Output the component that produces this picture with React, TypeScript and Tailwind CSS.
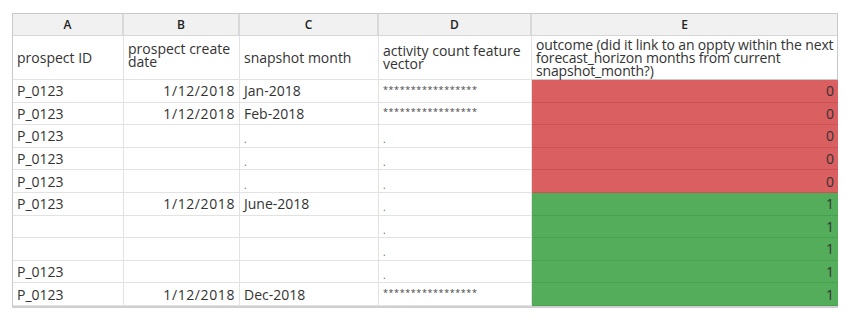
const cols = ['A', 'B', 'C', 'D', 'E'];

type Row = {
  id: string;
  date: string;
  month: string;
  vec: string;
  outcome: number;
};

const stars = '*****************';

const rows: Row[] = [
  { id: 'P_0123', date: '1/12/2018', month: 'Jan-2018', vec: stars, outcome: 0 },
  { id: 'P_0123', date: '1/12/2018', month: 'Feb-2018', vec: stars, outcome: 0 },
  { id: 'P_0123', date: '', month: '.', vec: '.', outcome: 0 },
  { id: 'P_0123', date: '', month: '.', vec: '.', outcome: 0 },
  { id: 'P_0123', date: '', month: '.', vec: '.', outcome: 0 },
  { id: 'P_0123', date: '1/12/2018', month: 'June-2018', vec: '.', outcome: 1 },
  { id: '', date: '', month: '', vec: '.', outcome: 1 },
  { id: '', date: '', month: '', vec: '.', outcome: 1 },
  { id: 'P_0123', date: '', month: '', vec: '.', outcome: 1 },
  { id: 'P_0123', date: '1/12/2018', month: 'Dec-2018', vec: stars, outcome: 1 },
];

const grid = 'grid grid-cols-[111px_116px_139px_153px_306px]';
const cell = 'border-r border-b border-[#e2e2e2] h-[22.6px] flex items-center overflow-hidden whitespace-nowrap';

export default function App() {
  return (
    <div className="w-[846px] h-[317px] bg-white pt-[13px] pl-[12px] font-['Open_Sans',sans-serif] text-[#333] text-[14px]">
      <div className="w-[826px] border-l border-t border-b-2 border-[#c9c9c9] border-b-[#cfcfcf]">
        {/* column letters */}
        <div className={grid + ' bg-[#f1f1f1] h-[22px]'}>
          {cols.map((c, i) => (
            <div
              key={c}
              className={
                'flex items-center justify-center text-[12px] font-semibold text-[#222] border-b border-[#d6d6d6] ' +
                (i < 4 ? 'border-r-2 border-r-[#d9d9d9]' : 'border-r border-r-[#c9c9c9]')
              }
            >
              {c}
            </div>
          ))}
        </div>

        {/* header labels */}
        <div className={grid + ' h-[44px]'}>
          <div className="border-r border-b border-[#e2e2e2] flex items-center pl-[4px]">prospect ID</div>
          <div className="border-r border-b border-[#e2e2e2] flex items-center pl-[4px] leading-[13px] pb-[6px] whitespace-nowrap">
            <div>prospect create<br />date</div>
          </div>
          <div className="border-r border-b border-[#e2e2e2] flex items-center pl-[4px]">snapshot month</div>
          <div className="border-r border-b border-[#e2e2e2] flex items-center pl-[4px] leading-[13px] pb-[2px] whitespace-nowrap">
            <div>activity count feature<br />vector</div>
          </div>
          <div className="border-r border-b border-[#c9c9c9] flex items-center pl-[4px] leading-[13px] whitespace-nowrap tracking-[-0.15px]">
            <div>
              outcome (did it link to an oppty within the next<br />
              forecast_horizon months from current<br />
              snapshot_month?)
            </div>
          </div>
        </div>

        {/* data */}
        {rows.map((r, i) => {
          const color = r.outcome === 0 ? 'bg-[#d95f61] border-[#c85254]' : 'bg-[#53ad5a] border-[#48a050]';
          return (
            <div key={i} className={grid}>
              <div className={cell + ' pl-[4px]'}>{r.id}</div>
              <div className={cell + ' justify-end pr-[4px] tracking-[0.6px]'}>{r.date}</div>
              <div className={cell + ' pl-[4px]'}>
                {r.month === '.' ? <span className="text-[10px] pt-[8px] text-[#666]">.</span> : r.month}
              </div>
              <div className={cell + ' pl-[4px]'}>
                {r.vec === '.' ? (
                  <span className="text-[10px] pt-[8px] text-[#666]">.</span>
                ) : (
                  <span className="text-[9px] tracking-[0.6px] pb-[3px] text-[#444]">{r.vec}</span>
                )}
              </div>
              <div className={'border-b h-[22.6px] flex items-center justify-end pr-[4px] text-[#333] ' + color}>
                {r.outcome}
              </div>
            </div>
          );
        })}
      </div>
    </div>
  );
}
